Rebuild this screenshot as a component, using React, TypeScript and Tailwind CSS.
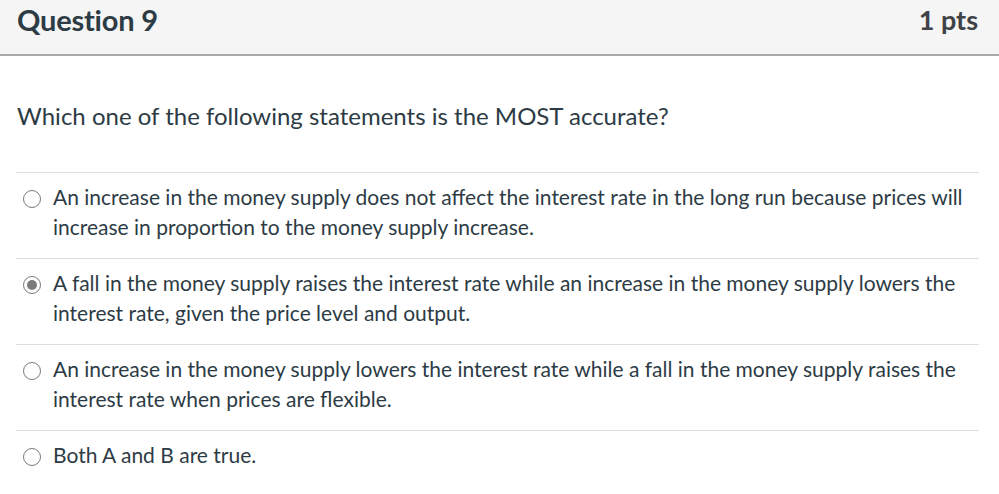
import React from "react";

const answers = [
  {
    text: "An increase in the money supply does not affect the interest rate in the long run because prices will increase in proportion to the money supply increase.",
    selected: false,
  },
  {
    text: "A fall in the money supply raises the interest rate while an increase in the money supply lowers the interest rate, given the price level and output.",
    selected: true,
  },
  {
    text: "An increase in the money supply lowers the interest rate while a fall in the money supply raises the interest rate when prices are flexible.",
    selected: false,
  },
  { text: "Both A and B are true.", selected: false },
];

function Radio({ selected }: { selected: boolean }) {
  return (
    <span className="mt-[8px] flex h-[18px] w-[18px] shrink-0 items-center justify-center rounded-full border-[1.5px] border-[#7b7b7b] bg-white">
      {selected && <span className="h-[10px] w-[10px] rounded-full bg-[#7b7b7b]" />}
    </span>
  );
}

export default function App() {
  return (
    <div className="w-[999px] h-[494px] overflow-hidden bg-white text-[#2d3b45]" style={{ fontFamily: "Lato, 'Open Sans', sans-serif" }}>
      <div className="flex h-[56px] items-start justify-between border-b-2 border-[#a9a9a9] bg-[#f5f5f5] pl-[17px] pr-[21px] pt-[5px]">
        <h2 className="text-[29px] font-bold leading-[30px] tracking-[-0.2px]">Question 9</h2>
        <span className="text-[27px] font-bold leading-[30px] text-[#3f4347]">1 pts</span>
      </div>
      <div className="px-[16px] pr-[20px]">
        <p className="pt-[46px] pb-[42px] pl-px text-[24px] leading-[28px]">
          Which one of the following statements is the MOST accurate?
        </p>
        <div>
          {answers.map((a, i) => (
            <div key={i} className="flex gap-[12px] border-t border-[#dedede] pt-[9px] pb-[16px] pl-[7px]">
              <Radio selected={a.selected} />
              <span className="text-[21px] leading-[30px]">{a.text}</span>
            </div>
          ))}
        </div>
      </div>
    </div>
  );
}
